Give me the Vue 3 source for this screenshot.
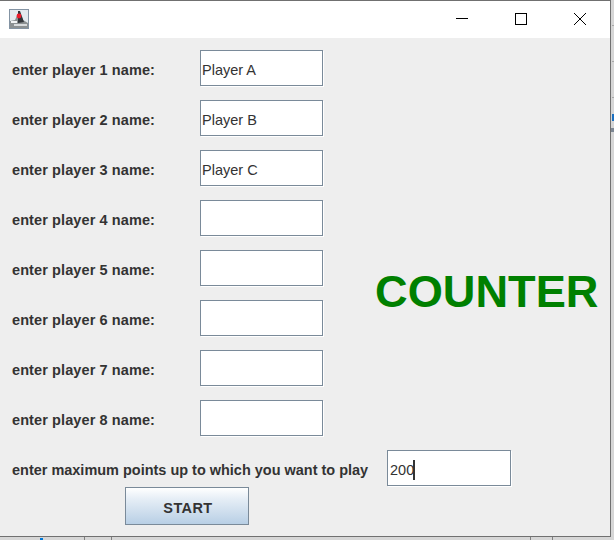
<template>
  <div class="desktop">
    <div class="window">
      <div class="titlebar">
        <svg class="app-icon" width="20" height="20" viewBox="0 0 20 20">
          <rect x="0.5" y="0.5" width="19" height="19" fill="#e4eaef" stroke="#8393a3" />
          <g class="icon-art">
            <path d="M1 12 L6 11 L10 2 L14 11 L19 14 L19 19 L1 19 Z" fill="#8b9092" />
            <path d="M9 2 L11 2 L15 13 L9 14 Z" fill="#33373c" />
            <path d="M2 12 H8 V14 H2 Z" fill="#f2f4f5" />
            <path d="M5 15 H18 V17 H5 Z" fill="#d8dbdd" />
            <circle cx="10" cy="7" r="2.4" fill="#ee1c2c" />
          </g>
        </svg>
        <div class="controls">
          <svg width="14" height="14" viewBox="0 0 14 14"><path d="M1 6.5 H13" stroke="#000" fill="none" /></svg>
          <svg width="14" height="14" viewBox="0 0 14 14"><rect x="1.5" y="1.5" width="11" height="11" stroke="#000" fill="none" /></svg>
          <svg width="14" height="14" viewBox="0 0 14 14"><path d="M1 1 L13 13 M13 1 L1 13" stroke="#000" fill="none" /></svg>
        </div>
      </div>
      <div class="content">
        <div class="top">
          <div class="players">
            <div class="row" v-for="(p, i) in players" :key="i">
              <label class="label">enter player {{ i + 1 }} name:</label>
              <div class="field">{{ p }}</div>
            </div>
          </div>
          <div class="counter">COUNTER</div>
        </div>
        <div class="row max-row">
          <label class="label max-label">enter maximum points up to which you want to play</label>
          <div class="field max-field">200<span class="caret"></span></div>
        </div>
        <button class="start">START</button>
      </div>
    </div>
  </div>
</template>

<script setup>
const players = ['Player A', 'Player B', 'Player C', '', '', '', '', '']
</script>

<style>
html, body {
  background: #d6d6d6;
  overflow: hidden;
}
</style>

<style scoped>
.desktop {
  width: 614px;
  height: 540px;
  overflow: hidden;
  font-family: "Liberation Sans", Arial, sans-serif;
  background:
    linear-gradient(#a8a8a8, #a8a8a8) 612px 25px / 2px 1px no-repeat,
    linear-gradient(#a8a8a8, #a8a8a8) 612px 61px / 2px 1px no-repeat,
    linear-gradient(#a8a8a8, #a8a8a8) 612px 97px / 2px 1px no-repeat,
    linear-gradient(#7d8794, #7d8794) 611px 128px / 3px 4px no-repeat,
    linear-gradient(#1a6fc0, #1a6fc0) 612px 114px / 2px 7px no-repeat,
    linear-gradient(#0078d7, #0078d7) 40px 538px / 3px 2px no-repeat,
    linear-gradient(#808080, #808080) 84px 537px / 1px 3px no-repeat,
    linear-gradient(#808080, #808080) 111px 537px / 1px 3px no-repeat,
    linear-gradient(#808080, #808080) 530px 537px / 1px 3px no-repeat,
    linear-gradient(#808080, #808080) 552px 537px / 1px 3px no-repeat,
    #d6d6d6;
}
.window {
  width: 611px;
  height: 537px;
  box-sizing: border-box;
  border: 1px solid #707070;
  border-left: none;
  background: #eeeeee;
  display: flex;
  flex-direction: column;
}
.titlebar {
  height: 37px;
  background: #fff;
  display: flex;
  align-items: center;
  justify-content: space-between;
  padding-left: 9px;
  padding-right: 23px;
  flex: none;
}
.app-icon {
  margin-top: -1px;
}
.icon-art {
  filter: blur(0.5px);
}
.controls {
  display: flex;
  gap: 45px;
  margin-top: -1px;
}
.controls svg {
  display: block;
}
.content {
  padding: 12px 0 0 12px;
}
.top {
  display: flex;
}
.players {
  display: flex;
  flex-direction: column;
  gap: 14px;
}
.row {
  display: flex;
  align-items: center;
}
.label {
  width: 188px;
  padding-top: 4px;
  font-size: 14.5px;
  letter-spacing: 0.1px;
  font-weight: bold;
  color: #333;
}
.field {
  width: 123px;
  height: 36px;
  box-sizing: border-box;
  border: 1px solid #7a8a99;
  background: #fff;
  box-shadow: 1px 1px 0 #fff;
  padding: 3px 0 0 1px;
  font-size: 14.5px;
  color: #333;
  display: flex;
  align-items: center;
}
.counter {
  margin-left: 52px;
  margin-top: 216px;
  align-self: flex-start;
  font-size: 45.2px;
  font-weight: bold;
  color: #008000;
}
.max-row {
  margin-top: 14px;
}
.max-label {
  width: 375px;
  font-size: 14.47px;
  letter-spacing: 0;
}
.max-field {
  width: 124px;
  padding-left: 2px;
}
.caret {
  width: 2px;
  height: 20px;
  margin-left: -1px;
  background: #333;
}
.start {
  display: block;
  margin: 1px 0 0 113px;
  padding: 3px 0 0 2px;
  width: 124px;
  height: 38px;
  border: 1px solid #7a8a99;
  background: linear-gradient(#fff, #e6eef6 30%, #b8cfe5);
  font-family: "Liberation Sans", Arial, sans-serif;
  font-size: 14.5px;
  font-weight: bold;
  letter-spacing: 0.4px;
  color: #333;
}
</style>
